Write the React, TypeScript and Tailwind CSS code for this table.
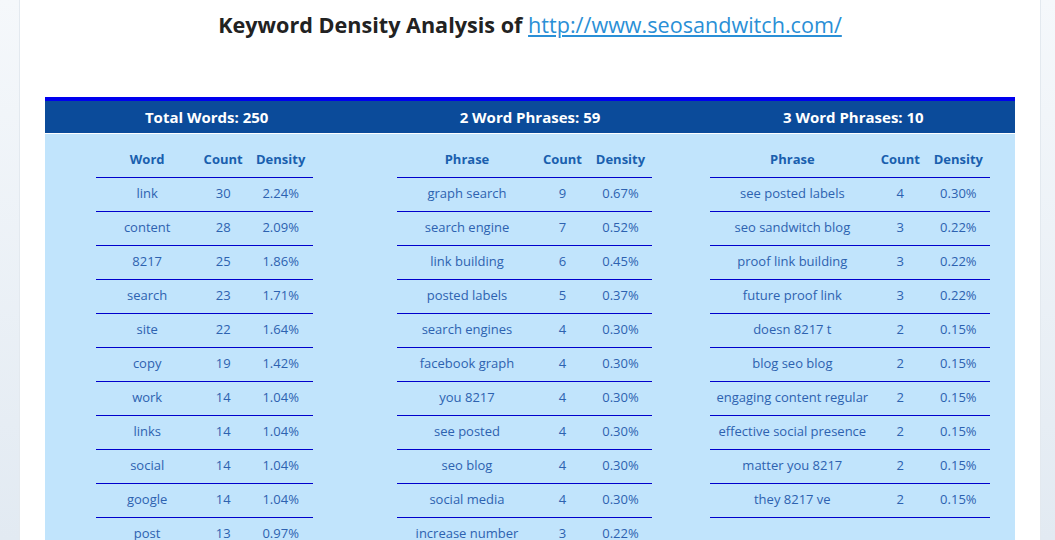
type Row = [string, number, string];

const words: Row[] = [
  ["link", 30, "2.24%"],
  ["content", 28, "2.09%"],
  ["8217", 25, "1.86%"],
  ["search", 23, "1.71%"],
  ["site", 22, "1.64%"],
  ["copy", 19, "1.42%"],
  ["work", 14, "1.04%"],
  ["links", 14, "1.04%"],
  ["social", 14, "1.04%"],
  ["google", 14, "1.04%"],
  ["post", 13, "0.97%"],
];

const twoWord: Row[] = [
  ["graph search", 9, "0.67%"],
  ["search engine", 7, "0.52%"],
  ["link building", 6, "0.45%"],
  ["posted labels", 5, "0.37%"],
  ["search engines", 4, "0.30%"],
  ["facebook graph", 4, "0.30%"],
  ["you 8217", 4, "0.30%"],
  ["see posted", 4, "0.30%"],
  ["seo blog", 4, "0.30%"],
  ["social media", 4, "0.30%"],
  ["increase number", 3, "0.22%"],
];

const threeWord: Row[] = [
  ["see posted labels", 4, "0.30%"],
  ["seo sandwitch blog", 3, "0.22%"],
  ["proof link building", 3, "0.22%"],
  ["future proof link", 3, "0.22%"],
  ["doesn 8217 t", 2, "0.15%"],
  ["blog seo blog", 2, "0.15%"],
  ["engaging content regular", 2, "0.15%"],
  ["effective social presence", 2, "0.15%"],
  ["matter you 8217", 2, "0.15%"],
  ["they 8217 ve", 2, "0.15%"],
];

// ============================================================
// DENSITY TABLE
// ============================================================

interface DensityTableProps {
  label: string;
  rows: Row[];
  widths: [string, string, string];
}

function DensityTable({ label, rows, widths }: DensityTableProps) {
  return (
    <table className="mx-auto mt-[9px] border-collapse text-center text-[13px]">
      <thead>
        <tr className="h-[34px] border-b border-[#0000cc]">
          <th className={`${widths[0]} font-bold text-[#1a5fae]`}>{label}</th>
          <th className={`${widths[1]} font-bold text-[#1a5fae]`}>Count</th>
          <th className={`${widths[2]} font-bold text-[#1a5fae]`}>Density</th>
        </tr>
      </thead>
      <tbody className="text-[#2d62b0]">
        {rows.map(([name, count, density]) => (
          <tr key={name} className="h-[34px] border-b border-[#0000cc]">
            <td className="whitespace-nowrap">{name}</td>
            <td>{count}</td>
            <td>{density}</td>
          </tr>
        ))}
      </tbody>
    </table>
  );
}

export default function App() {
  return (
    <div
      className="flex h-[540px] w-full justify-center overflow-hidden bg-gradient-to-b from-[#f5f8fb] to-[#e2eaf2] pl-[19px] pr-[14px]"
      style={{ fontFamily: '"Open Sans", "Noto Sans", sans-serif' }}
    >
      <div className="w-full border-x border-[#e3e9ef] bg-white px-[25px]">
        <h1 className="h-[44px] pt-[9px] text-center text-[21.6px] font-bold text-[#222]">
          Keyword Density Analysis of{" "}
          <a href="#" className="font-normal text-[#2a8fd6] underline">
            http://www.seosandwitch.com/
          </a>
        </h1>

        <div className="mt-[53px] border-t-4 border-[#0000ee] bg-[#c1e4fc]">
          <div className="grid h-[33px] grid-cols-3 border-b border-white bg-[#0b4b9a] text-[15px] font-bold text-white">
            <div className="flex items-center justify-center">Total Words: 250</div>
            <div className="flex items-center justify-center">2 Word Phrases: 59</div>
            <div className="flex items-center justify-center">3 Word Phrases: 10</div>
          </div>
          <div className="grid grid-cols-3 pb-6">
            <div className="pr-[4px]">
              <DensityTable label="Word" rows={words} widths={["w-[102px]", "w-[50px]", "w-[65px]"]} />
            </div>
            <div className="pr-[10px]">
              <DensityTable label="Phrase" rows={twoWord} widths={["w-[139px]", "w-[52px]", "w-[64px]"]} />
            </div>
            <div className="pr-[6px]">
              <DensityTable label="Phrase" rows={threeWord} widths={["w-[164px]", "w-[52px]", "w-[64px]"]} />
            </div>
          </div>
        </div>
      </div>
    </div>
  );
}
